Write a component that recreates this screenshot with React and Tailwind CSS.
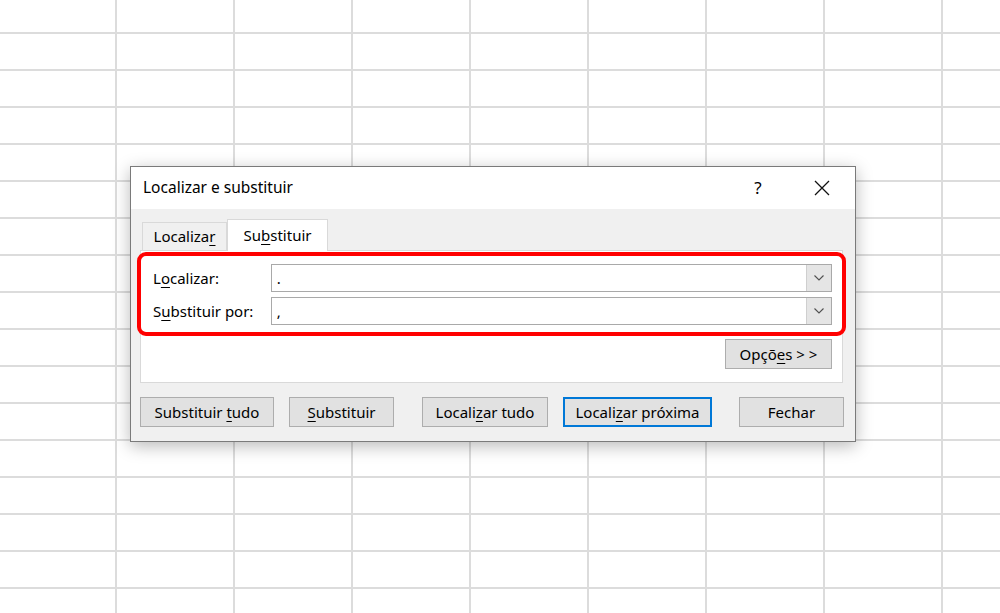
import React from "react";

const font = { fontFamily: '"Noto Sans", "Open Sans", sans-serif' };

const U = ({ children }) => <span className="underline underline-offset-[3px] decoration-1">{children}</span>;

const Chevron = () => (
  <svg width="12" height="8" viewBox="0 0 12 8" fill="none">
    <path d="M1.5 1.5 L6 6 L10.5 1.5" stroke="#505050" strokeWidth="1.1" />
  </svg>
);

const Field = ({ value }) => (
  <div className="flex h-[28px] w-[562px] border border-[#a9a9a9] bg-white">
    <div className="flex-1 pl-[5px] text-[15px] leading-[26px] text-black">{value}</div>
    <div className="flex w-[25px] items-center justify-center border-l border-[#cfcfcf] bg-[#e5e5e5]">
      <Chevron />
    </div>
  </div>
);

const Btn = ({ children, className = "border border-[#adadad]" }) => (
  <button
    className={`flex h-[30px] items-center justify-center bg-[#e1e1e1] text-[15px] text-black ${className}`}
  >
    <span className="whitespace-pre">{children}</span>
  </button>
);

export default function App() {
  const cells = Array.from({ length: 9 * 17 });

  return (
    <div className="relative h-[613px] w-[1000px] overflow-hidden bg-white" style={font}>
      {/* planilha ao fundo */}
      <div className="grid grid-cols-[117px_repeat(8,118px)] grid-rows-[34px_repeat(16,37px)]">
        {cells.map((_, i) => (
          <div key={i} className="border-b-2 border-r-2 border-[#dcdcdc]" />
        ))}
      </div>

      {/* dialog */}
      <div className="absolute left-[130px] top-[166px] flex h-[276px] w-[726px] flex-col border border-[#7a7a7a] bg-[#f0f0f0] shadow-[0_4px_16px_rgba(0,0,0,0.28)]">
        {/* title bar */}
        <div className="flex h-[42px] items-center bg-white pl-[12px] text-[15.5px] text-black">
          <span className="flex-1">Localizar e substituir</span>
          <span className="w-[20px] text-center text-[17px]">?</span>
          <span className="ml-[44px] mr-[23px] flex h-[20px] w-[20px] items-center justify-center">
            <svg width="16" height="16" viewBox="0 0 16 16">
              <path d="M1 1 L15 15 M15 1 L1 15" stroke="#111" strokeWidth="1.3" />
            </svg>
          </span>
        </div>

        {/* body */}
        <div className="flex flex-1 flex-col px-[9px]">
          {/* tabs */}
          <div className="mt-[10px] flex h-[31px] items-end pl-[2px] text-[15px] text-black">
            <div className="flex h-[28px] w-[85px] items-center justify-center border border-b-0 border-[#d9d9d9] bg-[#f0f0f0]">
              <span>
                Localiza<U>r</U>
              </span>
            </div>
            <div className="relative z-10 -mb-px flex h-[32px] w-[101px] items-center justify-center border border-b-0 border-[#d9d9d9] bg-white">
              <span>
                Su<U>b</U>stituir
              </span>
            </div>
          </div>

          {/* panel */}
          <div className="flex h-[133px] w-[703px] flex-col border border-[#d9d9d9] bg-white pl-[12px] pr-[10px] pt-[13px] text-[15px] text-black">
            <div className="flex items-center">
              <span className="w-[118px]">
                L<U>o</U>calizar:
              </span>
              <Field value="." />
            </div>
            <div className="mt-[5px] flex items-center">
              <span className="w-[118px]">
                S<U>u</U>bstituir por:
              </span>
              <Field value="," />
            </div>
            <div className="mt-[14px] flex justify-end">
              <Btn className="w-[107px] border border-[#adadad]">
                Opçõ<U>e</U>s &gt; &gt;
              </Btn>
            </div>
          </div>

          {/* buttons */}
          <div className="mt-[14px] flex">
            <Btn className="w-[134px] border border-[#adadad]">
              Substituir <U>t</U>udo
            </Btn>
            <Btn className="ml-[15px] w-[105px] border border-[#adadad]">
              <U>S</U>ubstituir
            </Btn>
            <Btn className="ml-[28px] w-[126px] border border-[#adadad]">
              Locali<U>z</U>ar tudo
            </Btn>
            <Btn className="ml-[15px] w-[149px] border-2 border-[#0078d7]">
              Locali<U>z</U>ar próxima
            </Btn>
            <Btn className="ml-[27px] w-[105px] border border-[#adadad]">Fechar</Btn>
          </div>
        </div>

        {/* destaque vermelho */}
        <div className="pointer-events-none absolute left-[6px] top-[85px] h-[84px] w-[709px] rounded-[9px] border-[4px] border-[#ff0000]" />
      </div>
    </div>
  );
}
